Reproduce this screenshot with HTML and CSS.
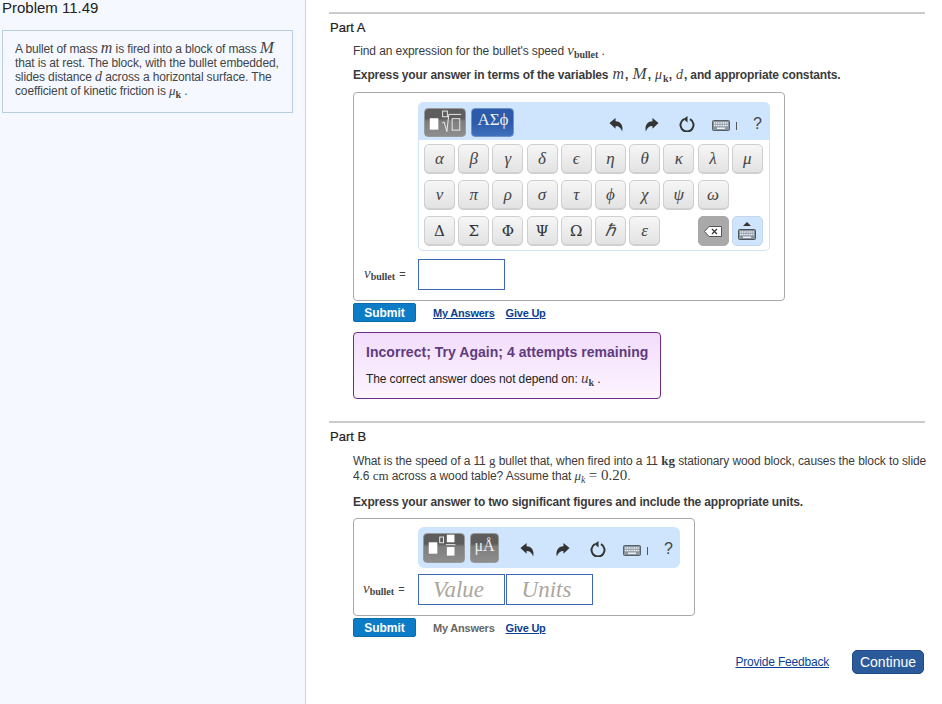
FILE: index.html
```html
<!DOCTYPE html>
<html lang="en">
<head>
<meta charset="utf-8">
<title>Problem 11.49</title>
<link rel="stylesheet" href="styles.css">
</head>
<body>
<svg class="defs" width="0" height="0" aria-hidden="true">
  <symbol id="i-undo" viewBox="0 0 16 16"><path d="M.5 6.500 7 1V4.400C12.500 4.600 15.500 9 14 15.500 13 11.500 10.500 9.500 7 9.500V12.500Z"/></symbol>
  <symbol id="i-redo" viewBox="0 0 16 16"><path d="M15.500 6.500 9 1V4.400C3.500 4.600 .5 9 2 15.500 3 11.500 5.500 9.500 9 9.500V12.500Z"/></symbol>
  <symbol id="i-reset" viewBox="0 0 16 16"><path d="M5 3.200A6.500 6.500 0 1 0 11 3.200" fill="none" stroke="#333" stroke-width="2"/><path d="M8.500 0V6.500L4.500 3Z" fill="#333"/></symbol>
  <symbol id="i-kbd" viewBox="0 0 18 11"><rect x=".5" y=".5" width="17" height="10" rx="1" fill="#8c96a1" stroke="#56606a"/><path d="M2 3H16M2 5.500H16" stroke="#eef1f4" stroke-width="1.400" stroke-dasharray="1.300 .5"/><path d="M5 8.200H13" stroke="#eef1f4" stroke-width="1.400"/></symbol>
</svg>

<div class="page">
  <aside class="side">
    <h1 class="title">Problem 11.49</h1>
    <div class="statement">
      A bullet of mass <i class="m big">m</i> is fired into a block of mass <i class="m big up-m">M</i><br>
      that is at rest. The block, with the bullet embedded,<br>
      slides distance <i class="m dv">d</i> across a horizontal surface. The<br>
      coefficient of kinetic friction is <i class="m">μ</i><b class="sub">k</b> .
    </div>
  </aside>

  <main class="main">
    <section class="part">
      <h2 class="part-title">Part A</h2>
      <div class="body">
        <p class="q">Find an expression for the bullet's speed <i class="m v">v</i><b class="sub">bullet</b> .</p>
        <p class="ins">Express your answer in terms of the variables <i class="m big">m</i>, <i class="m big up-m">M</i>, <i class="m reg">μ</i><b class="sub">k</b>, <i class="m dv">d</i>, and appropriate constants.</p>
        <div class="answer answer-a">
          <div class="keypad">
            <div class="toolbar">
              <span class="tpl tpl-grey wide">
                <svg width="42" height="29" viewBox="0 0 42 29"><rect x="5" y="10" width="9" height="12" fill="#fff"/><path d="M18 15 20 14 23 24 25 6H38" fill="none" stroke="#eee"/><rect x="18.500" y="2.500" width="5" height="6" fill="none" stroke="#eee"/><rect x="28.500" y="10.500" width="8" height="12" fill="none" stroke="#eee"/></svg>
              </span>
              <span class="tpl tpl-blue wide">ΑΣϕ</span>
              <span class="tools">
                <svg class="t-undo"><use href="#i-undo"/></svg>
                <svg class="t-redo"><use href="#i-redo"/></svg>
                <svg class="t-reset"><use href="#i-reset"/></svg>
                <svg class="t-kbd"><use href="#i-kbd"/></svg>
                <span class="t-sep"></span>
                <span class="t-help">?</span>
              </span>
            </div>
            <div class="keys">
              <span class="key">α</span><span class="key">β</span><span class="key">γ</span><span class="key">δ</span><span class="key">ϵ</span><span class="key">η</span><span class="key">θ</span><span class="key">κ</span><span class="key">λ</span><span class="key">μ</span>
              <span class="key">ν</span><span class="key">π</span><span class="key">ρ</span><span class="key">σ</span><span class="key">τ</span><span class="key">ϕ</span><span class="key">χ</span><span class="key">ψ</span><span class="key">ω</span><span class="blank"></span>
              <span class="key up">Δ</span><span class="key up">Σ</span><span class="key up">Φ</span><span class="key up">Ψ</span><span class="key up">Ω</span><span class="key">ℏ</span><span class="key">ε</span><span class="blank"></span>
              <span class="key key-back"><svg width="18" height="11" viewBox="0 0 18 11"><path d="M5 .5H17.500V10.500H5L.5 5.500Z" fill="#fff" stroke="#555"/><path d="M8 3 13 8M13 3 8 8" stroke="#333" stroke-width="1.200"/></svg></span>
              <span class="key key-kbd"><svg width="18" height="20" viewBox="0 0 18 20"><path d="M9 1 13 5H5Z" fill="#333"/><g transform="translate(0 8)"><rect x=".5" y=".5" width="17" height="10" rx="1" fill="#8c96a1" stroke="#4a525a"/><path d="M2 3H16M2 5.500H16" stroke="#eef1f4" stroke-width="1.400" stroke-dasharray="1.300 .5"/><path d="M5 8.200H13" stroke="#eef1f4" stroke-width="1.400"/></g></svg></span>
            </div>
          </div>
          <div class="entry">
            <span class="lbl"><i class="m lbl-v">v</i><b class="sub">bullet</b> <span class="eq">=</span></span>
            <span class="field"></span>
          </div>
        </div>
        <div class="actions">
          <span class="submit">Submit</span>
          <a class="act" href="#">My Answers</a>
          <a class="act" href="#">Give Up</a>
        </div>
        <div class="feedback">
          <div class="fb-head">Incorrect; Try Again; 4 attempts remaining</div>
          <div class="fb-text">The correct answer does not depend on: <i class="m v">u</i><b class="sub">k</b> .</div>
        </div>
      </div>
    </section>

    <section class="part part-b">
      <h2 class="part-title">Part B</h2>
      <div class="body">
        <p class="q q-b">What is the speed of a 11 <span class="r">g</span> bullet that, when fired into a 11 <span class="r bold">kg</span> stationary wood block, causes the block to slide<br>4.6 <span class="r">cm</span> across a wood table? Assume that <i class="m">μ</i><i class="sub">k</i> <span class="r big">= 0.20</span>.</p>
        <p class="ins ins-b">Express your answer to two significant figures and include the appropriate units.</p>
        <div class="answer answer-b">
          <div class="keypad keypad-b">
            <div class="toolbar toolbar-b">
              <span class="tpl tpl-grey wide">
                <svg width="42" height="30" viewBox="0 0 42 30"><rect x="5" y="9" width="9" height="12" fill="#fff"/><rect x="16.500" y="3.500" width="4" height="6" fill="none" stroke="#eee"/><rect x="24" y="1" width="8" height="8" fill="#fff"/><rect x="23" y="11" width="10" height="1" fill="#eee"/><rect x="24" y="14" width="8" height="9" fill="#fff"/></svg>
              </span>
              <span class="tpl tpl-grey narrow">μÅ</span>
              <span class="tools">
                <svg class="t-undo"><use href="#i-undo"/></svg>
                <svg class="t-redo"><use href="#i-redo"/></svg>
                <svg class="t-reset"><use href="#i-reset"/></svg>
                <svg class="t-kbd"><use href="#i-kbd"/></svg>
                <span class="t-sep"></span>
                <span class="t-help">?</span>
              </span>
            </div>
          </div>
          <div class="entry entry-b">
            <span class="lbl"><i class="m lbl-v">v</i><b class="sub">bullet</b> <span class="eq">=</span></span>
            <span class="field ph">Value</span>
            <span class="field ph">Units</span>
          </div>
        </div>
        <div class="actions">
          <span class="submit">Submit</span>
          <span class="act act-off">My Answers</span>
          <a class="act" href="#">Give Up</a>
        </div>
      </div>
    </section>

    <div class="foot">
      <a class="fb-link" href="#">Provide Feedback</a>
      <span class="continue">Continue</span>
    </div>
  </main>
</div>
</body>
</html>
```
FILE: styles.css
```css
html, body { margin: 0; padding: 0; background: #fff; }
body { font: 12px/14px "Liberation Sans", Arial, sans-serif; color: #3b3b3b; overflow: hidden; }
.defs { position: absolute; }
.page { display: flex; min-height: 704px; height: 100vh; }

.side { box-sizing: border-box; width: 306px; flex: none; background: #f5f9ff; border-right: 1px solid #c6d5e6; padding: 0 12px 0 2px; }
.title { margin: 0; font-size: 15px; line-height: 16px; font-weight: 400; color: #222; }
.statement { margin-top: 14px; height: 83px; box-sizing: border-box; border: 1px solid #b9cde0; padding: 11px 12px; white-space: nowrap; color: #444; letter-spacing: -.13px; }

.m { font-family: "Liberation Serif", serif; font-style: italic; font-size: 13px; line-height: 0; font-weight: 400; color: #444; letter-spacing: 0; }
.m.big { font-size: 16px; }
.m.up-m { font-size: 17px; }
.m.reg { font-size: 14px; }
.m.dv { font-size: 14px; }
.m.v { font-size: 15px; }
.sub { font-family: "Liberation Serif", serif; font-size: 10px; line-height: 0; vertical-align: -3px; color: #444; letter-spacing: 0; }
.r { font-family: "Liberation Serif", serif; font-size: 13px; font-weight: 400; line-height: 0; letter-spacing: 0; }
.r.bold { font-weight: 700; }
.r.big { font-size: 15px; }

.main { flex: 1; min-width: 0; padding: 12px 17px 0 23px; }
.part { border-top: 2px solid #cbcbcb; }
.part-b { margin-top: 22px; }
.part-title { margin: 7px 0 0 1px; font-size: 13px; line-height: 14px; font-weight: 400; color: #222; -webkit-text-stroke: .2px #222; }
.body { padding-left: 24px; }
.q { margin: 9px 0 0; line-height: 14px; white-space: nowrap; letter-spacing: -.1px; }
.q-b { margin-top: 10px; line-height: 15px; }
.ins { margin: 10px 0 0; font-weight: 700; white-space: nowrap; line-height: 14px; letter-spacing: -.15px; }
.ins .m { margin-left: 1px; margin-right: 1px; }
.ins-b { margin-top: 11px; }

.answer { box-sizing: border-box; width: 432px; margin-top: 10px; border: 1px solid #aaa; border-radius: 4px; padding: 9px 0 0 64px; height: 209px; }
.answer-b { width: 342px; height: 98px; margin-top: 9px; padding-top: 8px; }

.keypad { box-sizing: border-box; width: 352px; height: 149px; background: #fff; border: 1px solid #cfe3fb; border-radius: 5px; overflow: hidden; }
.keypad-b { width: 262px; height: 41px; background: #cfe4fd; border: 0; border-radius: 6px; }
.toolbar { display: flex; align-items: flex-start; height: 37px; box-sizing: border-box; background: #cfe4fd; padding: 5px 0 0 5px; }
.toolbar-b { height: 41px; padding-top: 6px; }
.tpl { box-sizing: border-box; height: 29px; border-radius: 4px; display: flex; align-items: center; justify-content: center; margin-right: 5px; color: #eee; font-family: "Liberation Serif", serif; font-size: 17px; }
.tpl svg { display: block; }
.wide { width: 42px; }
.narrow { width: 29px; align-items: flex-start; line-height: 24px; font-size: 16px; }
.toolbar-b .tpl { height: 30px; }
.tpl-grey { background: linear-gradient(#5d5d5d 0 35%, #7e7e7e 45%, #8d8d8d); border: 1px solid #9a9a9a; }
.tpl-blue { background: linear-gradient(#2b5baa 0 50%, #3f70bd); border: 1px solid #6f93c8; align-items: flex-start; line-height: 22px; padding-left: 1px; width: 43px; }
.tpl-grey.wide { padding: 0; }
.tools { margin-left: auto; display: flex; align-items: center; height: 28px; margin-top: 2px; color: #333; }
.tools svg { fill: #333; display: block; }
.t-undo { width: 15px; height: 15px; margin-right: 20px; }
.t-redo { width: 15px; height: 15px; margin-right: 20px; }
.t-reset { width: 16px; height: 16px; margin-right: 17px; }
.t-kbd { width: 18px; height: 11px; margin-right: 6px; margin-top: 3px; }
.t-sep { width: 1px; height: 8px; background: #555; margin-right: 16px; margin-top: 3px; }
.t-help { width: 8px; margin-right: 8px; font-size: 16px; color: #444; text-align: center; }

.keys { display: grid; grid-template-columns: repeat(10, 31px); grid-auto-rows: 30px; column-gap: 3.200px; row-gap: 6px; padding: 4px 0 0 5px; }
.key { box-sizing: border-box; display: flex; align-items: center; justify-content: center; border: 1px solid #cfcfcf; border-radius: 5px; background: linear-gradient(#f6f6f6, #e2e2e2); box-shadow: inset 0 -1px 0 #d0d0d0; font-family: "Liberation Serif", serif; font-style: italic; font-size: 17px; color: #444; }
.key.up { font-style: normal; font-family: "DejaVu Serif", serif; font-size: 15px; color: #333; }
.key-back { grid-column: 9; background: #a9a9a9; border-color: #a9a9a9; box-shadow: none; }
.key-kbd { background: #cfe4fd; border-color: #c4d6ea; box-shadow: none; }
.blank { display: block; }

.entry { display: flex; align-items: center; margin: 7px 0 0 -54px; height: 32px; }
.entry-b { margin: 5px 0 0 -55px; gap: 1px; }
.lbl { width: 54px; flex: none; white-space: nowrap; font-size: 11px; color: #444; }
.m.lbl-v { font-size: 15px; }
.lbl .sub { font-size: 10px; vertical-align: -2px; }
.eq { font-size: 11px; margin-left: 1px; }
.field { box-sizing: border-box; width: 87px; height: 31px; border: 1px solid #3d68b8; display: block; }
.ph { font: italic 23px/29px "Liberation Serif", serif; color: #aca6a0; text-align: center; padding-right: 6px; }

.actions { display: flex; align-items: center; height: 19px; margin-top: 2px; }
.submit { box-sizing: border-box; width: 63px; height: 19px; border-radius: 2px; background: #0d7cc6; border: 1px solid #0b6cac; color: #fff; font-weight: 700; text-align: center; line-height: 19px; margin-right: 17px; }
.act { font-size: 11px; font-weight: 700; color: #0b3f91; margin-right: 11px; letter-spacing: -.22px; }
.act-off { color: #666; text-decoration: none; }

.feedback { box-sizing: border-box; width: 308px; height: 67px; margin-top: 10px; border: 1px solid #6a2f85; border-radius: 4px; background: linear-gradient(#f2dcfb, #fdf5ff); padding: 11px 12px 0; }
.fb-head { font-size: 14px; line-height: 16px; font-weight: 700; color: #5f3b80; letter-spacing: .03px; white-space: nowrap; }
.fb-text { margin-top: 12px; color: #222; white-space: nowrap; letter-spacing: -.1px; }

.foot { display: flex; justify-content: flex-end; align-items: center; margin-top: 13px; }
.fb-link { font-size: 12px; color: #0b3f91; margin-right: 23px; letter-spacing: -.2px; }
.continue { box-sizing: border-box; width: 72px; height: 24px; border-radius: 5px; background: #2b5a9b; border: 1px solid #1f4a85; color: #fff; font-size: 14px; line-height: 22px; text-align: center; margin-right: 1px; }
```
